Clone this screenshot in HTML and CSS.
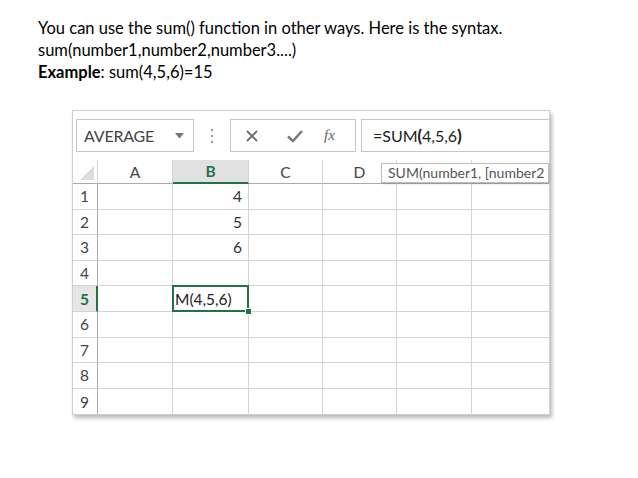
FILE: index.html
```html
<!DOCTYPE html>
<html>
<head>
<meta charset="utf-8">
<link rel="stylesheet" href="styles.css">
</head>
<body>
<div class="page">
  <div class="intro">
    <div>You can use the sum() function in other ways. Here is the syntax.</div>
    <div>sum(number1,number2,number3....)</div>
    <div><b>Example</b>: sum(4,5,6)=15</div>
  </div>
  <div class="panel">
    <div class="toolbar">
      <div class="namebox">
        <span class="name">AVERAGE</span>
        <svg class="caret" width="9" height="6" viewBox="0 0 9 6"><path d="M0 0h9L4.5 5.5z" fill="#777"/></svg>
      </div>
      <div class="grip">
        <svg width="4" height="18" viewBox="0 0 4 18"><circle cx="2" cy="3" r="1.2" fill="#999"/><circle cx="2" cy="9" r="1.2" fill="#999"/><circle cx="2" cy="15" r="1.2" fill="#999"/></svg>
      </div>
      <div class="buttons">
        <svg class="btn" width="14" height="14" viewBox="0 0 14 14"><path d="M2 2L12 12M12 2L2 12" stroke="#6a6a6a" stroke-width="1.8" fill="none"/></svg>
        <svg class="btn" width="18" height="14" viewBox="0 0 18 14"><path d="M2 7.5L7 12L16 2" stroke="#7a7a7a" stroke-width="2.6" fill="none" stroke-linejoin="round"/></svg>
        <span class="fx">fx</span>
      </div>
      <div class="formula">=SUM<b>(</b>4,5,6<b>)</b></div>
    </div>
    <div class="grid">
      <div class="corner"><svg width="14" height="14" viewBox="0 0 14 14"><path d="M14 0V14H0z" fill="#dcdcdc"/></svg></div>
      <div class="ch">A</div>
      <div class="ch sel">B</div>
      <div class="ch">C</div>
      <div class="ch">D</div>
      <div class="ch"></div>
      <div class="ch last"></div>

      <div class="rh">1</div><div class="c"></div><div class="c num">4</div><div class="c"></div><div class="c"></div><div class="c"></div><div class="c last"></div>
      <div class="rh">2</div><div class="c"></div><div class="c num">5</div><div class="c"></div><div class="c"></div><div class="c"></div><div class="c last"></div>
      <div class="rh">3</div><div class="c"></div><div class="c num">6</div><div class="c"></div><div class="c"></div><div class="c"></div><div class="c last"></div>
      <div class="rh">4</div><div class="c"></div><div class="c"></div><div class="c"></div><div class="c"></div><div class="c"></div><div class="c last"></div>
      <div class="rh sel">5</div><div class="c"></div><div class="c active">M(4,5,6)<span class="handle"></span></div><div class="c"></div><div class="c"></div><div class="c"></div><div class="c last"></div>
      <div class="rh">6</div><div class="c"></div><div class="c"></div><div class="c"></div><div class="c"></div><div class="c"></div><div class="c last"></div>
      <div class="rh">7</div><div class="c"></div><div class="c"></div><div class="c"></div><div class="c"></div><div class="c"></div><div class="c last"></div>
      <div class="rh">8</div><div class="c"></div><div class="c"></div><div class="c"></div><div class="c"></div><div class="c"></div><div class="c last"></div>
      <div class="rh lastrow">9</div><div class="c lastrow"></div><div class="c lastrow"></div><div class="c lastrow"></div><div class="c lastrow"></div><div class="c lastrow"></div><div class="c last lastrow"></div>
    </div>
    <div class="tooltip">SUM(number1, [number2</div>
  </div>
</div>
</body>
</html>
```

FILE: styles.css
```css
html, body {
  margin: 0;
  padding: 0;
  background: #fff;
}
.page {
  width: 638px;
  height: 478px;
  font-family: Lato, "Liberation Sans", sans-serif;
  color: #000;
}
.intro {
  padding: 17px 0 0 38px;
  font-size: 16.5px;
  line-height: 22px;
}
.intro b { font-weight: bold; }
.panel {
  position: relative;
  margin: 27px 0 0 72px;
  width: 476px;
  border: 1px solid #cfcfcf;
  box-shadow: 2px 3px 4px rgba(0,0,0,0.28);
  background: #fff;
  font-family: Lato, "Liberation Sans", sans-serif;
}
.toolbar {
  display: flex;
  align-items: center;
  height: 49px;
  padding-left: 3px;
}
.namebox {
  border: 1px solid #c6c6c6;
  display: flex;
  align-items: center;
  justify-content: space-between;
  padding: 0 9px 0 7px;
  box-sizing: border-box;
  width: 118px;
  height: 33px;
}
.name {
  font-size: 16px;
  color: #444;
  letter-spacing: -0.2px;
}
.caret { margin-top: 1px; }
.grip {
  width: 36px;
  display: flex;
  justify-content: center;
  align-items: center;
}
.buttons {
  width: 126px;
  height: 33px;
  box-sizing: border-box;
  border: 1px solid #c6c6c6;
  display: flex;
  align-items: center;
  padding-left: 14px;
}
.buttons .btn:first-child { margin-right: 27px; }
.buttons .btn:nth-child(2) { margin-right: 20px; }
.fx {
  font-family: "Liberation Serif", serif;
  font-style: italic;
  font-size: 15px;
  color: #666;
}
.formula {
  flex: 1;
  margin-left: 5px;
  height: 33px;
  box-sizing: border-box;
  border: 1px solid #c6c6c6;
  border-right: none;
  display: flex;
  align-items: center;
  padding-left: 11px;
  font-size: 16px;
  color: #222;
}
.formula b { font-weight: 900; }
.grid {
  display: grid;
  grid-template-columns: 25px 75px 76px 74px 74px 75px 1fr;
  grid-template-rows: 24px repeat(9, 25.6px);
  font-size: 15.5px;
  color: #333;
}
.corner {
  border-right: 1px solid #d4d4d4;
  border-bottom: 1px solid #ababab;
  display: flex;
  align-items: flex-end;
  justify-content: flex-end;
  padding: 0 3px 3px 0;
}
.ch {
  border-right: 1px solid #d4d4d4;
  border-bottom: 1px solid #ababab;
  display: flex;
  align-items: center;
  justify-content: center;
  color: #444;
}
.ch.sel {
  background: #e1e1e1;
  color: #217346;
  font-weight: bold;
  border-bottom: 2px solid #217346;
}
.rh {
  border-right: 1px solid #ababab;
  border-bottom: 1px solid #d4d4d4;
  display: flex;
  align-items: center;
  padding-left: 7px;
  color: #444;
}
.rh.sel {
  background: #e6e6e6;
  color: #217346;
  font-weight: bold;
  border-right: 2px solid #217346;
}
.c {
  border-right: 1px solid #d4d4d4;
  border-bottom: 1px solid #d4d4d4;
  display: flex;
  align-items: center;
  padding: 0 6px;
}
.c.num { justify-content: flex-end; }
.last { border-right: none; }
.lastrow { border-bottom: none; }
.active {
  position: relative;
  padding-left: 2px;
  color: #222;
}
.active::after {
  content: "";
  position: absolute;
  left: -1px;
  top: -1px;
  right: -1px;
  bottom: -1px;
  border: 2px solid #217346;
}
.handle {
  position: absolute;
  right: -4px;
  bottom: -4px;
  width: 5px;
  height: 5px;
  background: #217346;
  border: 1px solid #fff;
  z-index: 2;
}
.tooltip {
  position: absolute;
  left: 308px;
  top: 52px;
  right: 0;
  height: 20px;
  box-sizing: border-box;
  border: 1px solid #bdbdbd;
  background: #fff;
  font-size: 14px;
  color: #555;
  padding-left: 6px;
  line-height: 18px;
  white-space: nowrap;
  overflow: hidden;
  box-shadow: 1px 1px 2px rgba(0,0,0,0.15);
}
```
